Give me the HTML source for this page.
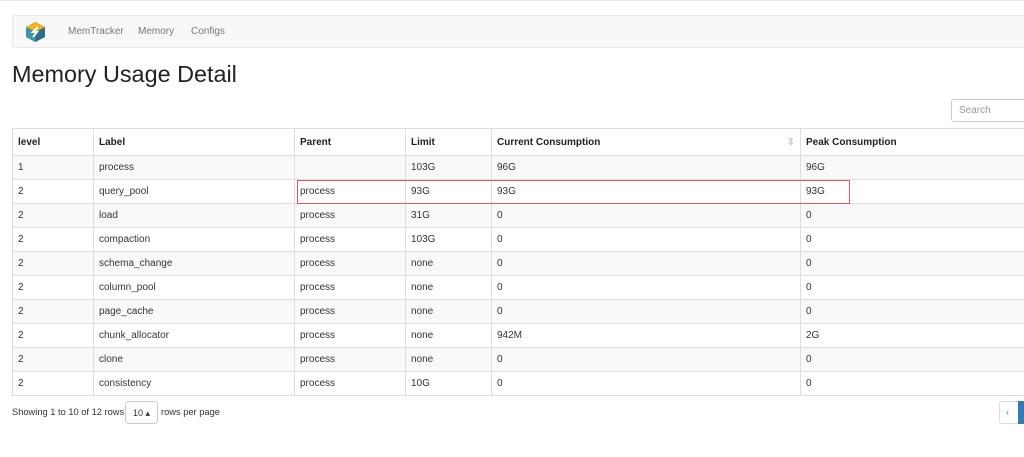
<!DOCTYPE html>
<html><head><style>
body{margin:0;width:1024px;height:457px;overflow:hidden;background:#fff;font-family:"Liberation Sans",sans-serif;font-size:10px;color:#333;position:relative}
.topline{position:absolute;left:0;top:0;width:1024px;height:1px;background:#e7e7e7}
.nav{position:absolute;left:12px;top:15px;width:1020px;height:31px;background:#f8f8f8;border:1px solid #e7e7e7;border-radius:3px}
.nav span{position:absolute;top:10px;color:#777;font-size:10px}
h1{position:absolute;left:12px;top:61px;margin:0;font-weight:normal;font-size:23.4px;color:#222}
.search{position:absolute;left:951px;top:99px;width:90px;height:23px;border:1px solid #ccc;border-radius:3px;box-sizing:border-box;color:#999;padding:5px 7px;font-size:10px}
table{position:absolute;left:12px;top:128px;border-collapse:collapse;border:1px solid #ddd;table-layout:fixed;width:1100px}
td,th{border-left:1px solid #ddd;border-top:1px solid #ddd;text-align:left;padding:0 5px;height:23px;font-size:10px;white-space:nowrap}
th{height:26px;font-weight:bold;color:#222;border-bottom:1px solid #ddd}
tr.s td{background:#f9f9f9}
.red{position:absolute;left:297px;top:180px;width:551px;height:22px;border:1px solid #e05a64;z-index:2}
.foot{position:absolute;left:12px;top:407px;font-size:9.3px;white-space:nowrap}
.btn{position:absolute;left:125px;top:401px;width:33px;height:23px;border:1px solid #ccc;border-radius:3px;box-sizing:border-box;font-size:9px;padding:6px 7px;white-space:nowrap;background:#fff}
.pg{position:absolute;left:999px;top:401px;width:20px;height:23px;border:1px solid #ddd;box-sizing:border-box;border-radius:3px 0 0 3px;color:#337ab7;font-size:9px;padding:5px 6px}
.pgb{position:absolute;left:1018px;top:401px;width:10px;height:23px;background:#337ab7}
</style></head><body>
<div class="topline"></div>
<div class="nav">
<svg style="position:absolute;left:13px;top:6px" width="19" height="20" viewBox="0 0 19 20"><polygon points="9.5,0 19,5 19,15 9.5,20 0,15 0,5" fill="#2b6e8c"/><polygon points="9.5,0 19,5 9.5,10 0,5" fill="#f3b41b"/><polygon points="0,5 9.5,10 9.5,20 0,15" fill="#3d94ad"/><path d="M12 5 L7 10 L11 10 L7 15" stroke="#fff" stroke-width="2" fill="none"/></svg>
<span style="left:55px">MemTracker</span><span style="left:125px">Memory</span><span style="left:178px">Configs</span>
</div>
<h1>Memory Usage Detail</h1>
<div class="search">Search</div>
<table>
<colgroup><col style="width:81px"><col style="width:201px"><col style="width:111px"><col style="width:86px"><col style="width:309px"><col style="width:312px"></colgroup>
<tr><th style="border-left:none">level</th><th>Label</th><th>Parent</th><th>Limit</th><th>Current Consumption <span style="float:right;color:#ccc">⇕</span></th><th>Peak Consumption</th></tr>
<tr class="s"><td>1</td><td>process</td><td></td><td>103G</td><td>96G</td><td>96G</td></tr>
<tr><td>2</td><td>query_pool</td><td>process</td><td>93G</td><td>93G</td><td>93G</td></tr>
<tr class="s"><td>2</td><td>load</td><td>process</td><td>31G</td><td>0</td><td>0</td></tr>
<tr><td>2</td><td>compaction</td><td>process</td><td>103G</td><td>0</td><td>0</td></tr>
<tr class="s"><td>2</td><td>schema_change</td><td>process</td><td>none</td><td>0</td><td>0</td></tr>
<tr><td>2</td><td>column_pool</td><td>process</td><td>none</td><td>0</td><td>0</td></tr>
<tr class="s"><td>2</td><td>page_cache</td><td>process</td><td>none</td><td>0</td><td>0</td></tr>
<tr><td>2</td><td>chunk_allocator</td><td>process</td><td>none</td><td>942M</td><td>2G</td></tr>
<tr class="s"><td>2</td><td>clone</td><td>process</td><td>none</td><td>0</td><td>0</td></tr>
<tr><td>2</td><td>consistency</td><td>process</td><td>10G</td><td>0</td><td>0</td></tr>
</table>
<div class="red"></div>
<div class="foot">Showing 1 to 10 of 12 rows</div>
<div class="btn">10 ▴</div>
<div class="foot" style="left:161px">rows per page</div>
<div class="pg">‹</div><div class="pgb"></div>
</body></html>
